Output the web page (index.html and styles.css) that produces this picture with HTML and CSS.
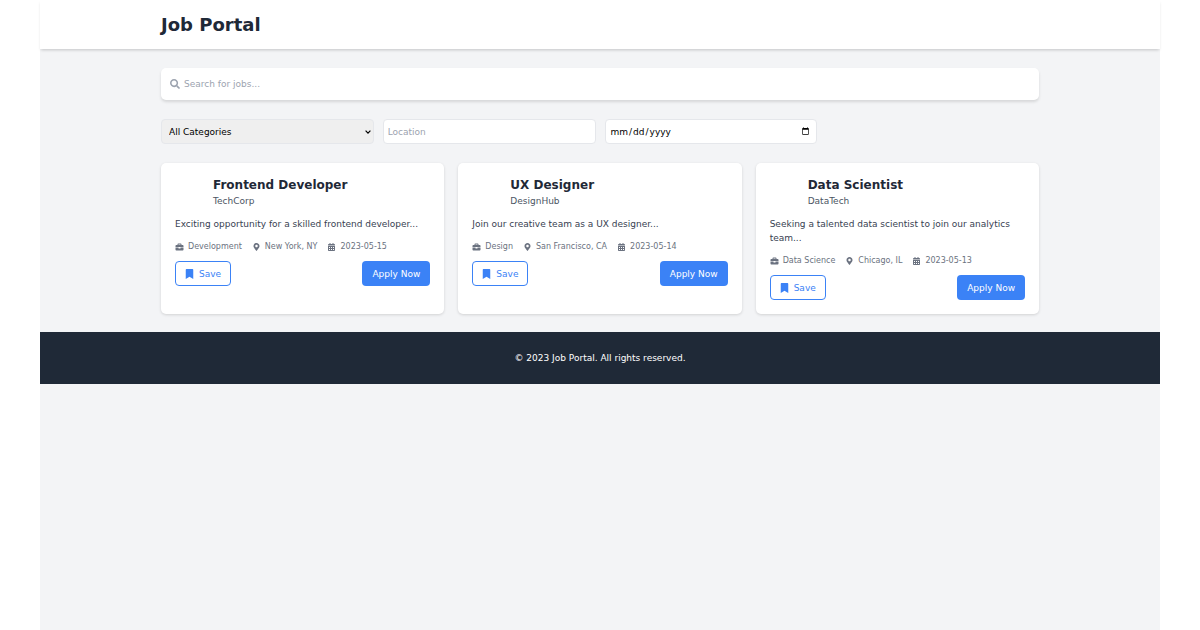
FILE: index.html
```html
<!DOCTYPE html>
<html lang="en">
<head>
    <meta charset="UTF-8">
    <meta name="viewport" content="width=device-width, initial-scale=1.0">
    <title>Job Portal</title>
    <link rel="stylesheet" href="styles.css">
</head>
<body>
    <!-- Shared icons -->
    <svg class="sprite" aria-hidden="true">
        <symbol id="search" viewBox="0 0 512 512">
            <path fill-rule="evenodd" d="M505 442.700 405.300 343c-4.500-4.500-10.600-7-17-7H372c27.600-35.300 44-79.700 44-128C416 93.100 322.900 0 208 0S0 93.100 0 208s93.100 208 208 208c48.300 0 92.700-16.400 128-44v16.300c0 6.400 2.500 12.500 7 17l99.700 99.700c9.400 9.400 24.600 9.400 33.900 0l28.300-28.300c9.400-9.400 9.400-24.600.1-34zM208 336c-70.700 0-128-57.200-128-128 0-70.700 57.200-128 128-128 70.700 0 128 57.200 128 128 0 70.700-57.200 128-128 128z"/>
        </symbol>
        <symbol id="briefcase" viewBox="0 0 512 512">
            <path fill-rule="evenodd" d="M320 336c0 8.800-7.200 16-16 16h-96c-8.800 0-16-7.200-16-16v-48H0v144c0 25.600 22.400 48 48 48h416c25.600 0 48-22.400 48-48V288H320zM464 128h-80V80c0-25.600-22.400-48-48-48H176c-25.600 0-48 22.400-48 48v48H48c-25.600 0-48 22.400-48 48v80h512v-80c0-25.600-22.400-48-48-48zm-144 0H192V96h128z"/>
        </symbol>
        <symbol id="pin" viewBox="0 0 384 512">
            <path fill-rule="evenodd" d="M172.300 501.700C27 291 0 269.400 0 192 0 86 86 0 192 0s192 86 192 192c0 77.400-27 99-172.300 309.700-9.500 13.800-29.900 13.800-39.400 0zM192 272c44.200 0 80-35.800 80-80s-35.800-80-80-80-80 35.800-80 80 35.800 80 80 80z"/>
        </symbol>
        <symbol id="calendar" viewBox="0 0 448 512">
            <path fill-rule="evenodd" d="M0 464c0 26.500 21.500 48 48 48h352c26.500 0 48-21.500 48-48V192H0zm320-204h64v60h-64zm0 128h64v60h-64zM192 260h64v60h-64zm0 128h64v60h-64zM64 260h64v60H64zm0 128h64v60H64zM400 64h-48V16c0-9-7-16-16-16h-32c-9 0-16 7-16 16v48H160V16c0-9-7-16-16-16h-32c-9 0-16 7-16 16v48H48C21.500 64 0 85.500 0 112v48h448v-48c0-26.500-21.500-48-48-48z"/>
        </symbol>
        <symbol id="bookmark" viewBox="0 0 384 512">
            <path d="M0 512V48C0 21.500 21.500 0 48 0h288c26.500 0 48 21.500 48 48v464L192 400z"/>
        </symbol>
    </svg>

    <div class="page">
        <header class="header">
            <div class="container">
                <h1>Job Portal</h1>
            </div>
        </header>

        <main class="container main">
            <div class="search-bar">
                <svg class="icon"><use href="#search"/></svg>
                <input type="text" placeholder="Search for jobs..." aria-label="Search for jobs">
            </div>

            <div class="filters">
                <select class="filter" aria-label="Category">
                    <option>All Categories</option>
                    <option>Development</option>
                    <option>Design</option>
                    <option>Data Science</option>
                </select>
                <input class="filter" type="text" placeholder="Location" aria-label="Location">
                <input class="filter" type="date" aria-label="Date">
            </div>

            <div class="jobs">
                <article class="card">
                    <div class="card-head">
                        <div class="logo"></div>
                        <div>
                            <h2>Frontend Developer</h2>
                            <p class="company">TechCorp</p>
                        </div>
                    </div>
                    <p class="description">Exciting opportunity for a skilled frontend developer...</p>
                    <div class="meta">
                        <span><svg class="icon"><use href="#briefcase"/></svg>Development</span>
                        <span><svg class="icon"><use href="#pin"/></svg>New York, NY</span>
                        <span><svg class="icon"><use href="#calendar"/></svg>2023-05-15</span>
                    </div>
                    <div class="actions">
                        <button class="btn btn-save"><svg class="icon"><use href="#bookmark"/></svg>Save</button>
                        <button class="btn btn-apply">Apply Now</button>
                    </div>
                </article>

                <article class="card">
                    <div class="card-head">
                        <div class="logo"></div>
                        <div>
                            <h2>UX Designer</h2>
                            <p class="company">DesignHub</p>
                        </div>
                    </div>
                    <p class="description">Join our creative team as a UX designer...</p>
                    <div class="meta">
                        <span><svg class="icon"><use href="#briefcase"/></svg>Design</span>
                        <span><svg class="icon"><use href="#pin"/></svg>San Francisco, CA</span>
                        <span><svg class="icon"><use href="#calendar"/></svg>2023-05-14</span>
                    </div>
                    <div class="actions">
                        <button class="btn btn-save"><svg class="icon"><use href="#bookmark"/></svg>Save</button>
                        <button class="btn btn-apply">Apply Now</button>
                    </div>
                </article>

                <article class="card">
                    <div class="card-head">
                        <div class="logo"></div>
                        <div>
                            <h2>Data Scientist</h2>
                            <p class="company">DataTech</p>
                        </div>
                    </div>
                    <p class="description">Seeking a talented data scientist to join our analytics team...</p>
                    <div class="meta">
                        <span><svg class="icon"><use href="#briefcase"/></svg>Data Science</span>
                        <span><svg class="icon"><use href="#pin"/></svg>Chicago, IL</span>
                        <span><svg class="icon"><use href="#calendar"/></svg>2023-05-13</span>
                    </div>
                    <div class="actions">
                        <button class="btn btn-save"><svg class="icon"><use href="#bookmark"/></svg>Save</button>
                        <button class="btn btn-apply">Apply Now</button>
                    </div>
                </article>
            </div>
        </main>

        <footer class="footer">
            <p>&copy; 2023 Job Portal. All rights reserved.</p>
        </footer>
    </div>
</body>
</html>
```
FILE: styles.css
```css
* {
    box-sizing: border-box;
    margin: 0;
    padding: 0;
}
body {
    font-family: "DejaVu Sans", sans-serif;
    font-size: 9px;
    line-height: 14px;
    color: #1f2937;
    background: #fff;
}
.sprite {
    display: none;
}
.icon {
    width: 9px;
    height: 8px;
    fill: currentColor;
    flex-shrink: 0;
}
.page {
    min-height: 100vh;
    margin: 0 40px;
    background: #f3f4f6;
}
.container {
    max-width: 896px;
    margin: 0 auto;
    padding: 0 9px;
}
.header {
    padding: 14px 0;
    background: #fff;
    box-shadow: 0 2px 3px -1px rgba(0, 0, 0, 0.2);
}
.header h1 {
    font-size: 18px;
    line-height: 21px;
}
.main {
    padding-top: 19px;
    padding-bottom: 18px;
}
.search-bar {
    display: flex;
    align-items: center;
    gap: 4px;
    height: 32px;
    margin-bottom: 19px;
    padding: 0 9px;
    background: #fff;
    border-radius: 5px;
    box-shadow: 0 2px 3px rgba(0, 0, 0, 0.12);
    color: #9ca3af;
}
.search-bar .icon {
    width: 10px;
    height: 10px;
}
.search-bar input {
    flex: 1;
    border: none;
    outline: none;
    font: inherit;
}
input::placeholder {
    color: #9ca3af;
}
.filters {
    display: grid;
    grid-template-columns: repeat(4, 1fr);
    gap: 9px;
    margin-bottom: 19px;
}
.filter {
    width: 100%;
    height: 25px;
    padding: 0 4px;
    border: 1px solid #e5e7eb;
    border-radius: 4px;
    background: #fff;
    color: #000;
    font: inherit;
}
select.filter {
    padding: 0 7px;
    appearance: none;
    background: #efefef url("data:image/svg+xml,%3Csvg xmlns='http://www.w3.org/2000/svg' viewBox='0 0 6 4'%3E%3Cpath d='M.6.7 3 3.100 5.400.7' fill='none' stroke='%23000' stroke-width='1.200'/%3E%3C/svg%3E") no-repeat right 2px center / 6px 4px;
}
.jobs {
    display: grid;
    grid-template-columns: repeat(3, 1fr);
    gap: 14px;
}
.card {
    padding: 14px;
    background: #fff;
    border-radius: 5px;
    box-shadow: 0 1px 3px rgba(0, 0, 0, 0.14);
}
.card-head {
    display: flex;
    align-items: center;
    margin-bottom: 9px;
}
.logo {
    width: 28px;
    height: 28px;
    margin-right: 10px;
    border-radius: 50%;
}
.card h2 {
    font-size: 12px;
    line-height: 17px;
}
.company {
    color: #4b5563;
}
.description {
    margin-bottom: 9px;
    color: #374151;
}
.meta {
    display: flex;
    gap: 10px;
    margin-bottom: 8px;
    color: #6b7280;
    font-size: 8px;
    line-height: 13px;
}
.meta span {
    display: flex;
    align-items: center;
    gap: 4px;
}
.actions {
    display: flex;
    justify-content: space-between;
}
.btn {
    display: flex;
    align-items: center;
    gap: 5px;
    height: 25px;
    padding: 0 10px;
    border: none;
    border-radius: 4px;
    font: inherit;
    cursor: pointer;
}
.btn-save {
    padding: 0 9px;
    border: 1px solid #3b82f6;
    background: #fff;
    color: #3b82f6;
}
.btn-save .icon {
    height: 10px;
}
.btn-apply {
    background: #3b82f6;
    color: #fff;
}
.footer {
    padding: 19px 0;
    background: #1f2937;
    color: #fff;
    text-align: center;
}
```
